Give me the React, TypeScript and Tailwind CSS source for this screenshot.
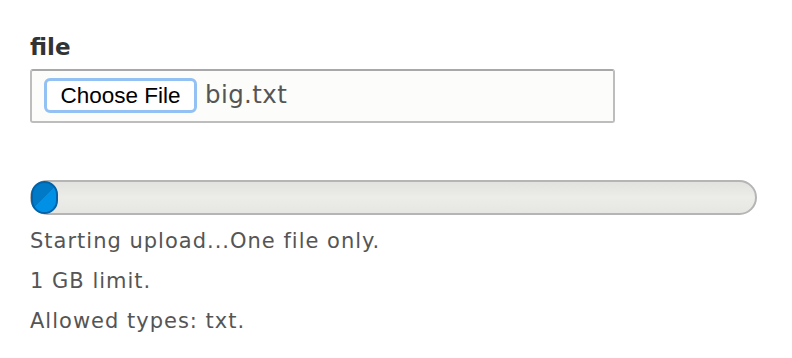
import React from "react";

export default function App() {
  return (
    <div className="w-[792px] h-[358px] bg-white pl-[30px] pt-[33px]" style={{ fontFamily: '"DejaVu Sans", sans-serif' }}>
      <div className="text-[23px] leading-[29px] font-bold text-[#333]">file</div>
      <div className="mt-[7px] w-[585px] h-[54px] rounded-[3px] border-2 border-[#bdbdbd] border-t-[#a8a8a8] bg-[#fcfcfa] flex items-center pl-[12px]">
        <div
          className="w-[153px] h-[35px] rounded-[6px] border-[3px] border-[#93c1f4] bg-white flex items-center justify-center text-[22.5px] text-black mt-[-1px]"
          style={{ fontFamily: '"Liberation Sans", Arial, sans-serif' }}
        >
          Choose File
        </div>
        <div className="ml-[8px] text-[24.5px] tracking-[0.4px] text-[#555] mt-[-2px]">big.txt</div>
      </div>
      <div className="mt-[57px] w-[727px] h-[35px] rounded-full border-2 border-[#b5b5b5] bg-gradient-to-b from-[#e2e2df] via-[#ecece9] to-[#e6e6e3] flex items-stretch">
        <div className="w-[27px] -ml-[1px] -my-[1px] rounded-full border-2 border-[#0062a8] bg-[linear-gradient(135deg,#0079c6_0%,#0079c6_50%,#0090e6_50%,#0090e6_100%)]" />
      </div>
      <div className="mt-[6px] text-[21px] leading-[40px] text-[#555] tracking-[1px]">
        <div>Starting upload...One file only.</div>
        <div>1 GB limit.</div>
        <div>Allowed types: txt.</div>
      </div>
    </div>
  );
}
